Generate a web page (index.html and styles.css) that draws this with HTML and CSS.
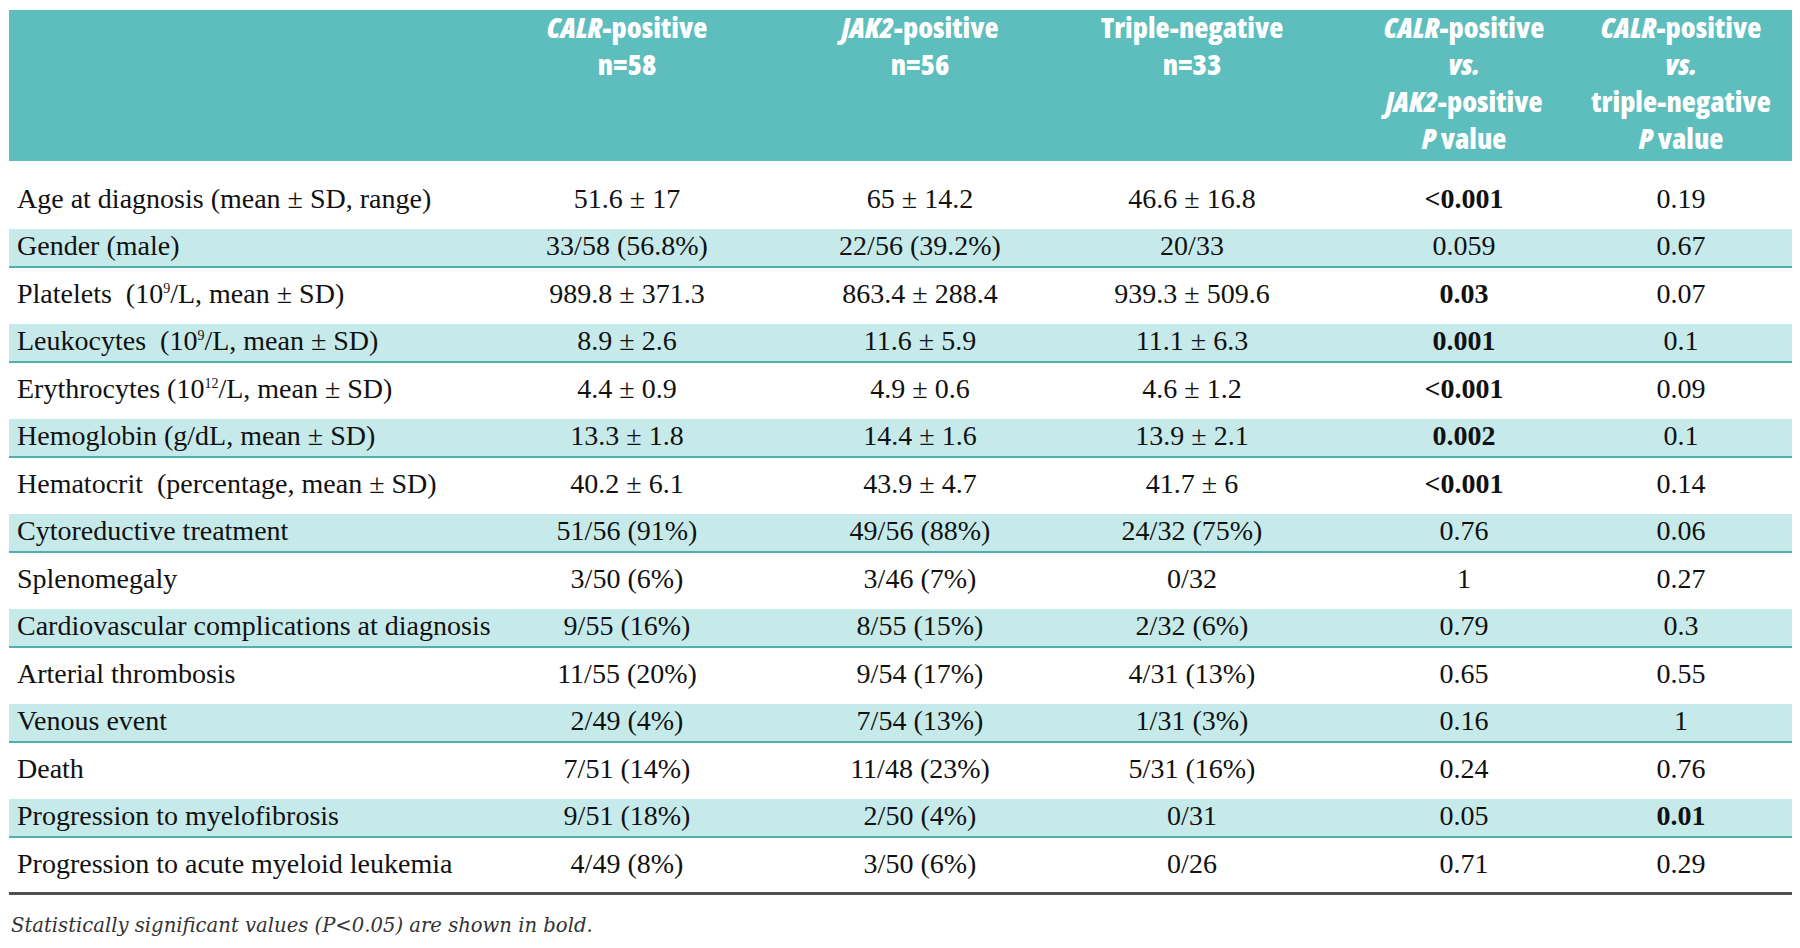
FILE: index.html
```html
<!DOCTYPE html>
<html>
<head>
<meta charset="utf-8">
<link rel="stylesheet" href="styles.css">
</head>
<body>
<div class="table">
  <div class="row head">
    <div class="cell label"></div>
    <div class="cell"><i>CALR</i>-positive<br>n=58</div>
    <div class="cell"><i>JAK2</i>-positive<br>n=56</div>
    <div class="cell">Triple-negative<br>n=33</div>
    <div class="cell"><i>CALR</i>-positive<br><i>vs.</i><br><i>JAK2</i>-positive<br><i>P</i> value</div>
    <div class="cell">
      <i>CALR</i>-positive<br><i>vs.</i><br>triple-negative<br><i>P</i> value</div>
  </div>
  <div class="tbody">
    <div class="row">
      <div class="cell label">Age at diagnosis (mean ± SD, range)</div>
      <div class="cell">51.6 ± 17</div><div class="cell">65 ± 14.2</div><div class="cell">46.6 ± 16.8</div>
      <div class="cell"><b>&lt;0.001</b></div><div class="cell">0.19</div>
    </div>
    <div class="row band">
      <div class="cell label">Gender (male)</div>
      <div class="cell">33/58 (56.8%)</div><div class="cell">22/56 (39.2%)</div><div class="cell">20/33</div>
      <div class="cell">0.059</div><div class="cell">0.67</div>
    </div>
    <div class="row">
      <div class="cell label">Platelets&nbsp; (10<sup>9</sup>/L, mean ± SD)</div>
      <div class="cell">989.8 ± 371.3</div><div class="cell">863.4 ± 288.4</div><div class="cell">939.3 ± 509.6</div>
      <div class="cell"><b>0.03</b></div><div class="cell">0.07</div>
    </div>
    <div class="row band">
      <div class="cell label">Leukocytes&nbsp; (10<sup>9</sup>/L, mean ± SD)</div>
      <div class="cell">8.9 ± 2.6</div><div class="cell">11.6 ± 5.9</div><div class="cell">11.1 ± 6.3</div>
      <div class="cell"><b>0.001</b></div><div class="cell">0.1</div>
    </div>
    <div class="row">
      <div class="cell label">Erythrocytes (10<sup>12</sup>/L, mean ± SD)</div>
      <div class="cell">4.4 ± 0.9</div><div class="cell">4.9 ± 0.6</div><div class="cell">4.6 ± 1.2</div>
      <div class="cell"><b>&lt;0.001</b></div><div class="cell">0.09</div>
    </div>
    <div class="row band">
      <div class="cell label">Hemoglobin (g/dL, mean ± SD)</div>
      <div class="cell">13.3 ± 1.8</div><div class="cell">14.4 ± 1.6</div><div class="cell">13.9 ± 2.1</div>
      <div class="cell"><b>0.002</b></div><div class="cell">0.1</div>
    </div>
    <div class="row">
      <div class="cell label">Hematocrit&nbsp; (percentage, mean ± SD)</div>
      <div class="cell">40.2 ± 6.1</div><div class="cell">43.9 ± 4.7</div><div class="cell">41.7 ± 6</div>
      <div class="cell"><b>&lt;0.001</b></div><div class="cell">0.14</div>
    </div>
    <div class="row band">
      <div class="cell label">Cytoreductive treatment</div>
      <div class="cell">51/56 (91%)</div><div class="cell">49/56 (88%)</div><div class="cell">24/32 (75%)</div>
      <div class="cell">0.76</div><div class="cell">0.06</div>
    </div>
    <div class="row">
      <div class="cell label">Splenomegaly</div>
      <div class="cell">3/50 (6%)</div><div class="cell">3/46 (7%)</div><div class="cell">0/32</div>
      <div class="cell">1</div><div class="cell">0.27</div>
    </div>
    <div class="row band">
      <div class="cell label">Cardiovascular complications at diagnosis</div>
      <div class="cell">9/55 (16%)</div><div class="cell">8/55 (15%)</div><div class="cell">2/32 (6%)</div>
      <div class="cell">0.79</div><div class="cell">0.3</div>
    </div>
    <div class="row">
      <div class="cell label">Arterial thrombosis</div>
      <div class="cell">11/55 (20%)</div><div class="cell">9/54 (17%)</div><div class="cell">4/31 (13%)</div>
      <div class="cell">0.65</div><div class="cell">0.55</div>
    </div>
    <div class="row band">
      <div class="cell label">Venous event</div>
      <div class="cell">2/49 (4%)</div><div class="cell">7/54 (13%)</div><div class="cell">1/31 (3%)</div>
      <div class="cell">0.16</div><div class="cell">1</div>
    </div>
    <div class="row">
      <div class="cell label">Death</div>
      <div class="cell">7/51 (14%)</div><div class="cell">11/48 (23%)</div><div class="cell">5/31 (16%)</div>
      <div class="cell">0.24</div><div class="cell">0.76</div>
    </div>
    <div class="row band">
      <div class="cell label">Progression to myelofibrosis</div>
      <div class="cell">9/51 (18%)</div><div class="cell">2/50 (4%)</div><div class="cell">0/31</div>
      <div class="cell">0.05</div><div class="cell"><b>0.01</b></div>
    </div>
    <div class="row last">
      <div class="cell label">Progression to acute myeloid leukemia</div>
      <div class="cell">4/49 (8%)</div><div class="cell">3/50 (6%)</div><div class="cell">0/26</div>
      <div class="cell">0.71</div><div class="cell">0.29</div>
    </div>
  </div>
</div>
<p class="note">Statistically significant values (P&lt;0.05) are shown in bold.</p>
</body>
</html>
```
FILE: styles.css
```css
html, body {
  margin: 0;
  padding: 0;
  background: #ffffff;
}

body {
  padding: 10px 8px 0 9px;
}

.table {
  width: 1783px;
}

.row {
  display: grid;
  grid-template-columns: 431px 374px 212px 332px 212px 222px;
}

.cell {
  text-align: center;
  white-space: nowrap;
}

.cell.label {
  text-align: left;
  padding-left: 8px;
}

.head {
  background: #5ebdbd;
  height: 151px;
  box-sizing: border-box;
  color: #ffffff;
  font-family: "Open Sans", "DejaVu Sans", sans-serif;
  font-stretch: 82%;
  font-weight: 800;
  font-size: 29px;
  line-height: 37px;
}

.head .cell {
  margin-top: -2px;
}

.head i {
  font-style: italic;
}

.tbody {
  padding-top: 12px;
  border-bottom: 3px solid #505050;
  font-family: "Liberation Serif", serif;
  font-size: 28px;
  color: #111111;
}

.tbody .row {
  height: 56px;
  box-sizing: border-box;
  padding-top: 7px;
  line-height: 37px;
}

.tbody .row.band {
  height: 39px;
  padding-top: 0;
  line-height: 33px;
  background: #c6eaea;
  border-bottom: 2px solid #4fb0b0;
}

.tbody .row.last {
  height: 54px;
}

.tbody b {
  font-weight: bold;
}

sup {
  font-size: 14px;
  line-height: 0;
  vertical-align: 10px;
}

.note {
  margin: 20px 0 0 2px;
  font-family: "DejaVu Serif", serif;
  font-style: italic;
  font-size: 19.6px;
  line-height: 22px;
  color: #333333;
}
```
